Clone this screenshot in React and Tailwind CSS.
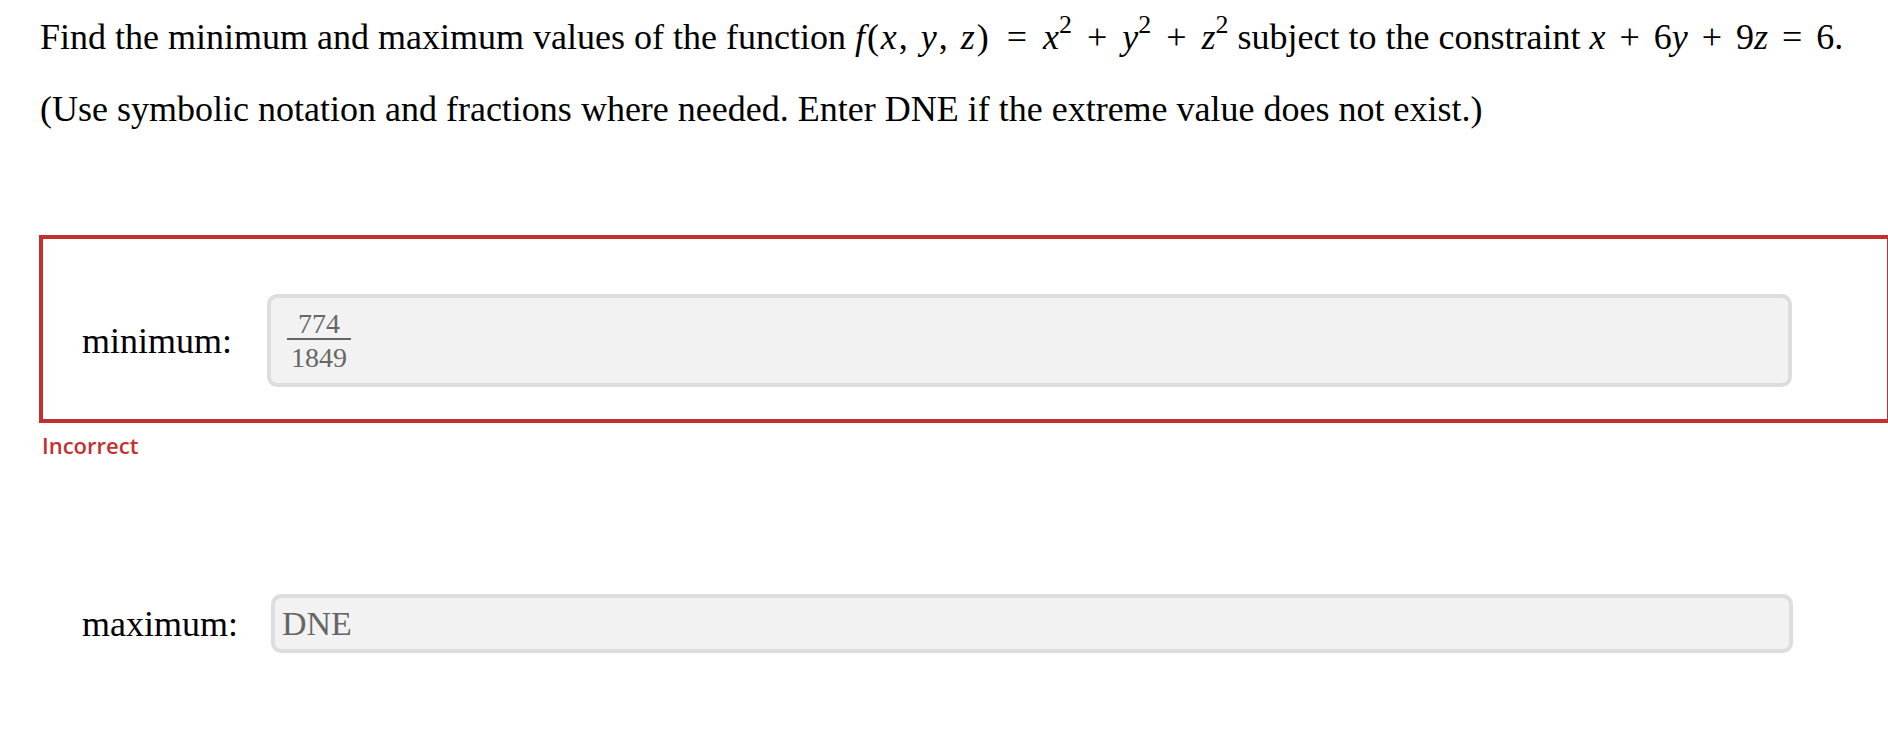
const Var = ({ children }) => <i>{children}</i>

const Sq = ({ children }) => (
  <>
    <Var>{children}</Var>
    <sup className="text-[0.72em] -top-[0.6em]">2</sup>
  </>
)

const Op = ({ children, rel, tight }) => (
  <span className={tight ? "mx-[14px]" : rel ? "mx-[16px]" : "mx-[15px]"}>{children}</span>
)

export default function App() {
  return (
    <div className="w-[1888px] h-[736px] overflow-hidden bg-white text-black font-['Liberation_Serif','Times_New_Roman',serif]">
      <div className="pl-[39px] pt-[17px]">
        <p className="pl-[1px] text-[36px] leading-[40px] whitespace-nowrap">
          Find the minimum and maximum values of the function{" "}
          <span className="tracking-[0.055em]">
            <Var>f</Var>(<Var>x</Var>, <Var>y</Var>, <Var>z</Var>)
          </span>
          <Op rel>=</Op>
          <Sq>x</Sq>
          <Op>+</Op>
          <Sq>y</Sq>
          <Op>+</Op>
          <Sq>z</Sq> subject to the constraint <Var>x</Var>
          <Op tight>+</Op>6<Var>y</Var>
          <Op tight>+</Op>9<Var>z</Var>
          <Op tight>=</Op>6.
        </p>
        <p className="pl-[1px] mt-[32px] text-[36px] leading-[40px] whitespace-nowrap">
          (Use symbolic notation and fractions where needed. Enter DNE if the extreme value does not exist.)
        </p>

        <div className="mt-[106px] border-[4px] border-r-[1px] border-[#c3302f] pt-[55px] pb-[32px] pl-[39px] pr-[95px] flex items-center">
          <div className="w-[185px] shrink-0 text-[36px] leading-[40px]">minimum:</div>
          <div className="flex-1 h-[93px] rounded-[10px] border-[4px] border-[#dddddd] bg-[#f2f2f2] pl-[16px] flex items-center text-[28px] text-[#666666]">
            <div className="flex flex-col items-center">
              <span className="leading-[24px]">774</span>
              <span className="w-[64px] h-[2px] bg-[#666666] mt-[2px] mb-[6px]"></span>
              <span className="leading-[24px]">1849</span>
            </div>
          </div>
        </div>

        <div className="mt-[8px] pl-[3px] text-[22px] leading-[28px] font-semibold text-[#c3302f] font-['Open_Sans','Noto_Sans',sans-serif]">
          Incorrect
        </div>

        <div className="mt-[135px] pl-[43px] pr-[95px] flex items-center">
          <div className="w-[189px] shrink-0 text-[36px] leading-[40px]">maximum:</div>
          <div className="flex-1 h-[59px] rounded-[10px] border-[4px] border-[#dddddd] bg-[#f2f2f2] pl-[7px] flex items-center text-[34px] leading-[38px] text-[#666666]">
            DNE
          </div>
        </div>
      </div>
    </div>
  )
}
